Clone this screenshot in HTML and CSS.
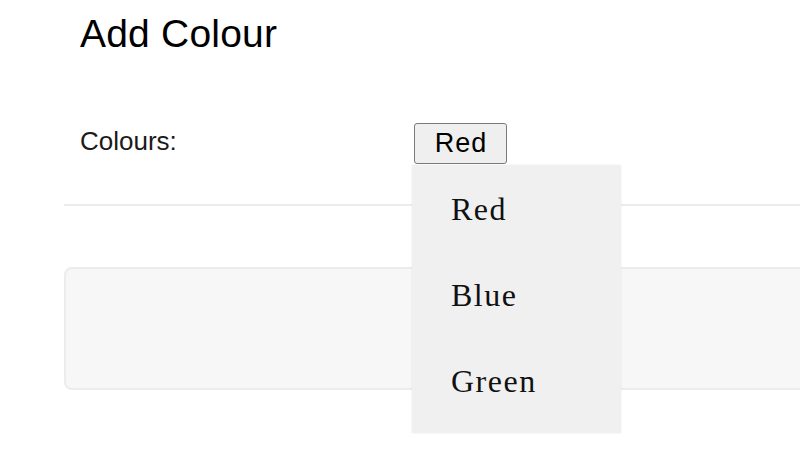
FILE: index.html
```html
<!DOCTYPE html>
<html>
<head>
<meta charset="utf-8">
<link rel="stylesheet" href="styles.css">
</head>
<body>
<div class="page">
  <h1 class="title">Add Colour</h1>
  <div class="row">
    <label class="label">Colours:</label>
    <div class="select-wrap">
      <button class="select">Red</button>
      <ul class="menu">
        <li class="item">Red</li>
        <li class="item">Blue</li>
        <li class="item">Green</li>
      </ul>
    </div>
  </div>
  <div class="divider"></div>
  <div class="card"></div>
</div>
</body>
</html>
```

FILE: styles.css
```css
html, body {
  margin: 0;
  padding: 0;
  background: #ffffff;
  overflow: hidden;
}
body {
  width: 800px;
  height: 450px;
  font-family: "Liberation Sans", Arial, sans-serif;
}
.page {
  padding: 12px 0 0 64px;
}
.title {
  margin: 0 0 0 16px;
  font-size: 39px;
  letter-spacing: 0.2px;
  font-weight: normal;
  color: #000;
  line-height: 44px;
}
.row {
  display: grid;
  grid-template-columns: 350px auto;
  align-items: start;
  margin-top: 67px;
  height: 40px;
}
.label {
  margin: 3px 0 0 16px;
  font-size: 26px;
  color: #1a1a1a;
  line-height: normal;
}
.select-wrap {
  position: relative;
  justify-self: start;
}
.select {
  display: block;
  height: 41px;
  width: 93px;
  padding: 0 0 0 1px;
  background: #efefef;
  border: 1px solid #7a7a7a;
  border-radius: 3px;
  font-family: "Liberation Sans", Arial, sans-serif;
  font-size: 27px;
  letter-spacing: 1px;
  color: #000;
  line-height: 39px;
}
.menu {
  position: absolute;
  left: -2px;
  top: 42px;
  width: 209px;
  height: 268px;
  margin: 0;
  padding: 0;
  list-style: none;
  background: #f0f0f0;
  overflow: hidden;
  box-shadow: 0 0 2px rgba(0,0,0,0.08);
  z-index: 5;
}
.item {
  height: 86px;
  line-height: 88px;
  padding-left: 39px;
  font-family: "Liberation Serif", "Times New Roman", serif;
  font-size: 32px;
  letter-spacing: 1.5px;
  color: #111;
}
.divider {
  margin-top: 41px;
  height: 2px;
  background: #ececec;
}
.card {
  margin-top: 61px;
  margin-right: -20px;
  height: 119px;
  background: #f7f7f7;
  border: 2px solid #ececec;
  border-radius: 8px;
}
```
